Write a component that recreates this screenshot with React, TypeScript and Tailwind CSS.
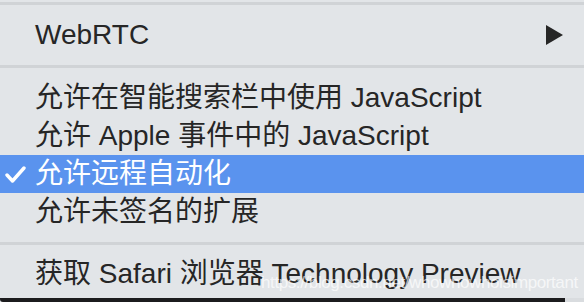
import React from "react";

type Item = {
    label: string;
    checked?: boolean;
    active?: boolean;
    submenu?: boolean;
};

const groups: Item[][] = [
    [{ label: "WebRTC", submenu: true }],
    [
        { label: "允许在智能搜索栏中使用 JavaScript" },
        { label: "允许 Apple 事件中的 JavaScript" },
        { label: "允许远程自动化", checked: true, active: true },
        { label: "允许未签名的扩展" },
    ],
    [{ label: "获取 Safari 浏览器 Technology Preview" }],
];

function Row({ item }: { item: Item }) {
    return (
        <div
            className={`flex h-[38px] items-center leading-[38px] ${
                item.active ? "bg-[#5a93ee] text-white" : "text-[#262626]"
            }`}
        >
            <span className="flex w-[35px] shrink-0 justify-start pl-[5px]">
                {item.checked && (
                    <svg width="21" height="17" viewBox="0 0 21 17" fill="none">
                        <path
                            d="M2 9 L7.5 15 L19 2"
                            stroke="white"
                            strokeWidth="3.4"
                            strokeLinecap="round"
                            strokeLinejoin="round"
                        />
                    </svg>
                )}
            </span>
            <span className="whitespace-nowrap">{item.label}</span>
            {item.submenu && (
                <svg className="ml-auto mr-[21px]" width="17" height="20" viewBox="0 0 17 20">
                    <polygon points="0,0 17,10 0,20" fill="#262626" />
                </svg>
            )}
        </div>
    );
}

export default function App() {
    return (
        <div
            className="relative flex h-[302px] w-[584px] flex-col overflow-hidden bg-[#e2e5e8] pt-[2px] text-[28px]"
            style={{ fontFamily: '"Liberation Sans", "Noto Sans CJK SC", sans-serif' }}
        >
            {groups.map((group, gi) => (
                <React.Fragment key={gi}>
                    <div className="h-[3px] shrink-0 bg-[#d0d3d6]" />
                    <div className={`flex flex-col ${gi === 2 ? "pt-[10px]" : "py-[11px]"}`}>
                        {group.map((item) => (
                            <Row key={item.label} item={item} />
                        ))}
                    </div>
                </React.Fragment>
            ))}

            {/* csdn watermark sits over the last row */}
            <span
                className="pointer-events-none absolute left-[261px] top-[274px] text-[17px] leading-[17px] tracking-[-0.4px] text-white/70"
                style={{ fontFamily: '"Liberation Sans", sans-serif' }}
            >
                https://blog.csdn.net/whowhowhoisimportant
            </span>

            <div className="mt-auto flex h-[4px] shrink-0">
                <div className="flex-1 rounded-bl-[3px] bg-[#1c1c1e]" />
                <div className="w-[19px] bg-[#d9dcdf]" />
            </div>
        </div>
    );
}
